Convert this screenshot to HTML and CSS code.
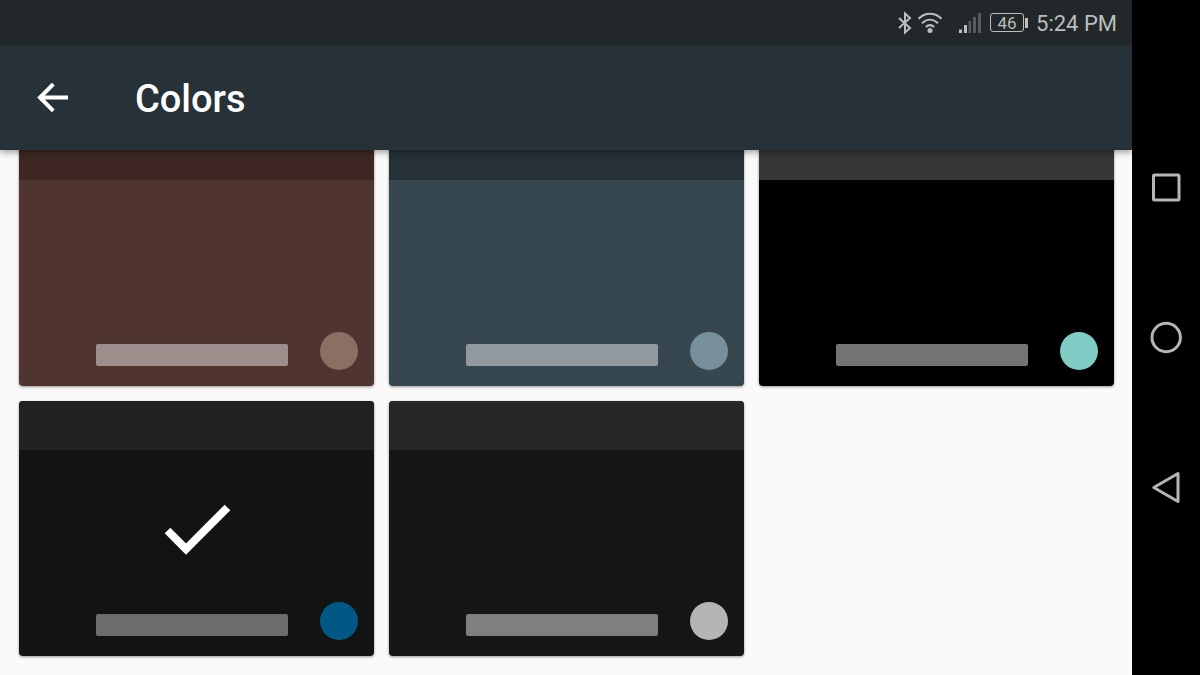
FILE: index.html
```html
<!DOCTYPE html>
<html lang="en">
<head>
<meta charset="utf-8">
<meta name="viewport" content="width=device-width, initial-scale=1">
<title>Colors</title>
<link rel="stylesheet" href="styles.css">
</head>
<body>
<div class="app">
  <div class="status-bar">
    <svg class="bluetooth" width="14" height="24" viewBox="0 0 14 24" aria-hidden="true"><path d="M1 7l11 10-5 4.500V2.500L12 7 1 17"/></svg>
    <svg class="wifi" width="26" height="22" viewBox="0 0 26 22" aria-hidden="true"><path d="M1.500 6.800C8 0 18 0 24.500 6.800M5 11.200c5-4.700 11-4.700 16 0M8.800 15c2.600-2.300 5.800-2.300 8.400 0"/><circle cx="13" cy="18.500" r="2.500"/></svg>
    <svg class="signal" width="22" height="22" viewBox="0 0 22 22" aria-hidden="true"><path class="on" d="M0 17.500h3V21H0zM5 13h3v8H5z"/><path class="off" d="M9.500 9h2.500v12H9.500zM14 5h3v16h-3zM19 1h3v20h-3z"/></svg>
    <span class="battery"><span class="battery-level">46</span></span>
    <span class="time">5:24 PM</span>
  </div>
  <header class="toolbar">
    <button class="back" type="button" aria-label="Back">
      <svg width="32" height="32" viewBox="0 0 32 32" aria-hidden="true"><path d="M31 15.500H3.500M16.300 2.200L3 15.500l13.300 13.300"/></svg>
    </button>
    <h1 class="title">Colors</h1>
  </header>
  <main class="content">
    <div class="grid">
      <button class="card brown" type="button" aria-label="Brown"><span class="card-head"></span><span class="card-foot"><span class="bar"></span><span class="dot"></span></span></button>
      <button class="card slate" type="button" aria-label="Blue grey"><span class="card-head"></span><span class="card-foot"><span class="bar"></span><span class="dot"></span></span></button>
      <button class="card black" type="button" aria-label="Black"><span class="card-head"></span><span class="card-foot"><span class="bar"></span><span class="dot"></span></span></button>
      <button class="card navy" type="button" aria-label="Dark blue" aria-pressed="true"><span class="card-head"></span><svg class="check" width="68" height="52" viewBox="0 0 68 52" aria-hidden="true"><path d="M4.500 27.500L23 46 64.500 4.500"/></svg><span class="card-foot"><span class="bar"></span><span class="dot"></span></span></button>
      <button class="card grey" type="button" aria-label="Dark grey"><span class="card-head"></span><span class="card-foot"><span class="bar"></span><span class="dot"></span></span></button>
    </div>
  </main>
</div>
<nav class="nav-bar" aria-label="System">
  <button class="nav-button" type="button" aria-label="Recent apps"><svg width="34" height="34" viewBox="0 0 34 34"><rect x="4.500" y="4" width="25.500" height="25" rx="1"/></svg></button>
  <button class="nav-button" type="button" aria-label="Home"><svg width="34" height="34" viewBox="0 0 34 34"><circle cx="17.200" cy="16.500" r="14.200"/></svg></button>
  <button class="nav-button" type="button" aria-label="Back"><svg width="34" height="34" viewBox="0 0 34 34"><path d="M4.800 16.500L29 2.500v28z"/></svg></button>
</nav>
</body>
</html>
```
FILE: styles.css
```css
* {
  box-sizing: border-box;
}

body {
  margin: 0;
  height: 100vh;
  display: flex;
  background: #000;
  font-family: Roboto, "Liberation Sans", sans-serif;
}

button {
  border: 0;
  padding: 0;
  background: none;
  cursor: pointer;
}

svg {
  display: block;
  fill: none;
}

.app {
  flex: 1;
  min-width: 0;
  display: flex;
  flex-direction: column;
  background: #fafafa;
}

.status-bar {
  flex: none;
  position: relative;
  z-index: 2;
  height: 45px;
  padding-right: 15px;
  display: flex;
  align-items: center;
  justify-content: flex-end;
  background: #222729;
  color: #bcbebe;
}

.bluetooth {
  margin-right: 5px;
  stroke: currentColor;
  stroke-width: 2;
}

.wifi {
  margin-right: 16px;
  stroke: currentColor;
  stroke-width: 2;
}

.wifi circle {
  fill: currentColor;
  stroke: none;
}

.signal {
  margin-right: 9px;
}

.on {
  fill: #bcbebe;
}

.off {
  fill: #565a5c;
}

.battery {
  margin-right: 8px;
  display: flex;
  align-items: center;
  gap: 1px;
}

.battery::after {
  content: "";
  width: 3px;
  height: 10px;
  background: currentColor;
}

.battery-level {
  width: 34px;
  height: 19px;
  border: 1px solid currentColor;
  border-radius: 3px;
  font-size: 17px;
  line-height: 19px;
  text-align: center;
}

.time {
  padding-top: 2px;
  font-size: 22px;
  line-height: 26px;
}

.toolbar {
  flex: none;
  position: relative;
  z-index: 1;
  height: 105px;
  padding-left: 37px;
  display: flex;
  align-items: center;
  gap: 66px;
  background: #273238;
  box-shadow: 0 2px 7px rgba(0, 0, 0, 0.4);
  color: #fff;
}

.back {
  color: #fff;
}

.back path {
  stroke: currentColor;
  stroke-width: 4;
}

.title {
  margin: 0;
  padding-top: 2px;
  font-size: 38px;
  line-height: 44px;
  font-weight: 500;
}

/* The list is scrolled to its end, so the last row sits at the bottom. */
.content {
  flex: 1;
  min-height: 0;
  padding: 0 18px 19px 19px;
  display: flex;
  flex-direction: column;
  justify-content: flex-end;
  overflow: hidden;
}

.grid {
  flex: none;
  display: grid;
  grid-template-columns: repeat(3, 1fr);
  gap: 15px;
}

.card {
  height: 255px;
  display: flex;
  flex-direction: column;
  justify-content: space-between;
  border-radius: 4px;
  overflow: hidden;
  box-shadow: 0 1px 3px rgba(0, 0, 0, 0.4);
}

.card-head {
  width: 100%;
  height: 49px;
}

.card-foot {
  width: 100%;
  padding: 0 16px 16px;
  display: flex;
  align-items: flex-end;
  justify-content: flex-end;
  gap: 32px;
}

.bar {
  width: 192px;
  height: 22px;
  margin-bottom: 4px;
  border-radius: 2px;
}

.dot {
  width: 38px;
  height: 38px;
  border-radius: 50%;
}

.check {
  align-self: center;
  margin-top: 6px;
}

.check path {
  stroke: #fff;
  stroke-width: 8;
}

.brown { background: #4f342f; }
.brown .card-head { background: #3e2723; }
.brown .bar { background: #9d8f8b; }
.brown .dot { background: #8d6e63; }

.slate { background: #37474f; }
.slate .card-head { background: #263238; }
.slate .bar { background: #90999e; }
.slate .dot { background: #78909c; }

.black { background: #000; }
.black .card-head { background: #373737; }
.black .bar { background: #737373; }
.black .dot { background: #80cbc4; }

.navy { background: #131313; }
.navy .card-head { background: #212121; }
.navy .bar { background: #6c6c6c; }
.navy .dot { background: #005984; }

.grey { background: #161616; }
.grey .card-head { background: #272727; }
.grey .bar { background: #7f7f7f; }
.grey .dot { background: #b5b5b5; }

.nav-bar {
  flex: none;
  width: 68px;
  padding: 113px 0;
  display: flex;
  flex-direction: column;
  align-items: center;
  justify-content: space-around;
}

.nav-button {
  padding: 58px 17px;
}

.nav-button svg {
  stroke: #b5b5b5;
  stroke-width: 3;
  stroke-linejoin: round;
}
```
